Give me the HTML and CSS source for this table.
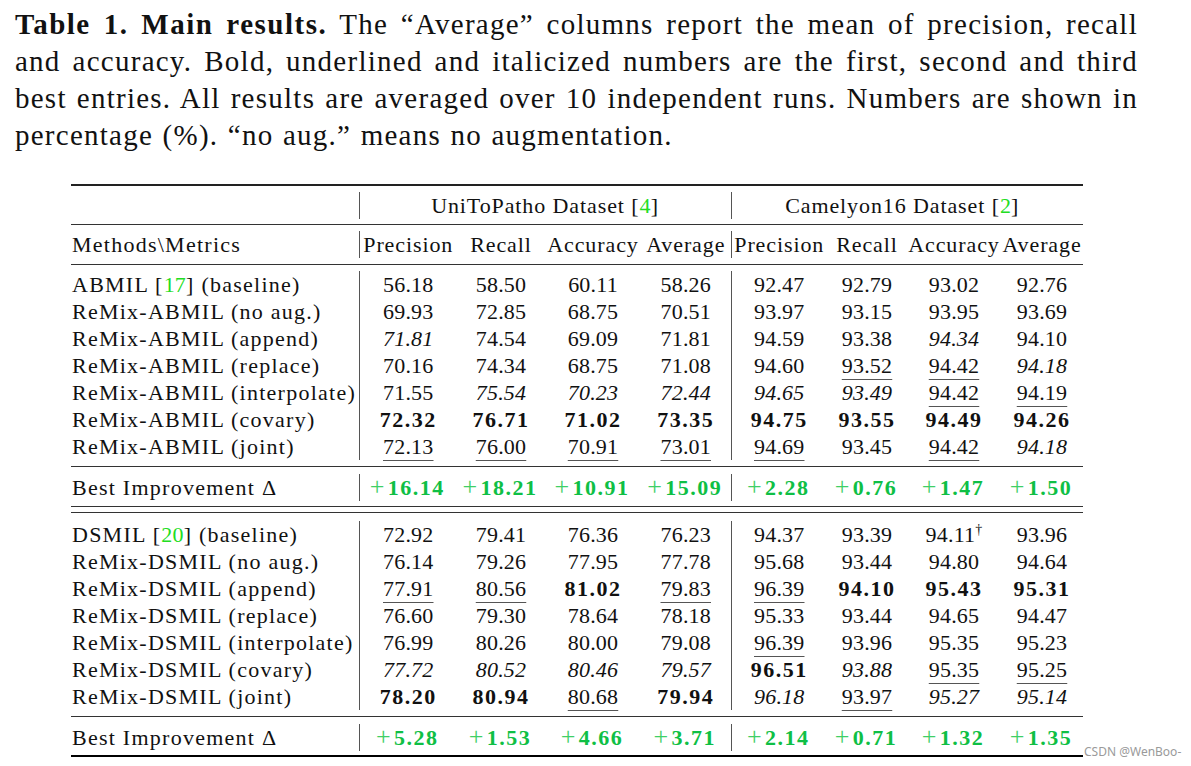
FILE: index.html
```html
<!DOCTYPE html>
<html>
<head>
<meta charset="utf-8">
<link rel="stylesheet" href="styles.css">
</head>
<body>
<div class="page">
  <div class="caption">
    <div class="cline just"><b>Table 1. Main results.</b> The “Average” columns report the mean of precision, recall</div>
    <div class="cline just">and accuracy. Bold, underlined and italicized numbers are the first, second and third</div>
    <div class="cline just">best entries. All results are averaged over 10 independent runs. Numbers are shown in</div>
    <div class="cline">percentage (%). “no aug.” means no augmentation.</div>
  </div>

  <table class="results">
    <colgroup>
      <col class="c-method">
      <col class="c-a1"><col class="c-a2"><col class="c-a3"><col class="c-a4">
      <col class="c-b1"><col class="c-b2"><col class="c-b3"><col class="c-b4">
    </colgroup>
    <tr class="rule"><td colspan="9"><div class="line top"></div></td></tr>
    <tr class="row head">
      <td></td>
      <td colspan="4" class="vl">UniToPatho Dataset [<span class="cite">4</span>]</td>
      <td colspan="4" class="vl cam">Camelyon16 Dataset [<span class="cite">2</span>]</td>
    </tr>
    <tr class="rule"><td colspan="9"><div class="line mid m1"></div></td></tr>
    <tr class="row head">
      <td class="name">Methods\Metrics</td>
      <td class="vl">Precision</td><td>Recall</td><td>Accuracy</td><td>Average</td>
      <td class="vl">Precision</td><td>Recall</td><td>Accuracy</td><td>Average</td>
    </tr>
    <tr class="rule"><td colspan="9"><div class="line mid m2"></div></td></tr>

    <tr class="row">
      <td class="name">ABMIL [<span class="cite">17</span>] (baseline)</td>
      <td class="vl">56.18</td><td>58.50</td><td>60.11</td><td>58.26</td>
      <td class="vl">92.47</td><td>92.79</td><td>93.02</td><td>92.76</td>
    </tr>
    <tr class="row">
      <td class="name">ReMix-ABMIL (no aug.)</td>
      <td class="vl">69.93</td><td>72.85</td><td>68.75</td><td>70.51</td>
      <td class="vl">93.97</td><td>93.15</td><td>93.95</td><td>93.69</td>
    </tr>
    <tr class="row">
      <td class="name">ReMix-ABMIL (append)</td>
      <td class="vl"><i>71.81</i></td><td>74.54</td><td>69.09</td><td>71.81</td>
      <td class="vl">94.59</td><td>93.38</td><td><i>94.34</i></td><td>94.10</td>
    </tr>
    <tr class="row">
      <td class="name">ReMix-ABMIL (replace)</td>
      <td class="vl">70.16</td><td>74.34</td><td>68.75</td><td>71.08</td>
      <td class="vl">94.60</td><td><u>93.52</u></td><td><u>94.42</u></td><td><i>94.18</i></td>
    </tr>
    <tr class="row">
      <td class="name">ReMix-ABMIL (interpolate)</td>
      <td class="vl">71.55</td><td><i>75.54</i></td><td><i>70.23</i></td><td><i>72.44</i></td>
      <td class="vl"><i>94.65</i></td><td><i>93.49</i></td><td><u>94.42</u></td><td><u>94.19</u></td>
    </tr>
    <tr class="row">
      <td class="name">ReMix-ABMIL (covary)</td>
      <td class="vl"><b>72.32</b></td><td><b>76.71</b></td><td><b>71.02</b></td><td><b>73.35</b></td>
      <td class="vl"><b>94.75</b></td><td><b>93.55</b></td><td><b>94.49</b></td><td><b>94.26</b></td>
    </tr>
    <tr class="row">
      <td class="name">ReMix-ABMIL (joint)</td>
      <td class="vl"><u>72.13</u></td><td><u>76.00</u></td><td><u>70.91</u></td><td><u>73.01</u></td>
      <td class="vl"><u>94.69</u></td><td>93.45</td><td><u>94.42</u></td><td><i>94.18</i></td>
    </tr>
    <tr class="rule"><td colspan="9"><div class="line mid m3"></div></td></tr>
    <tr class="row best">
      <td class="name">Best Improvement Δ</td>
      <td class="vl"><span class="pl">+</span>16.14</td><td><span class="pl">+</span>18.21</td><td><span class="pl">+</span>10.91</td><td><span class="pl">+</span>15.09</td>
      <td class="vl"><span class="pl">+</span>2.28</td><td><span class="pl">+</span>0.76</td><td><span class="pl">+</span>1.47</td><td><span class="pl">+</span>1.50</td>
    </tr>
    <tr class="rule"><td colspan="9"><div class="double"></div></td></tr>

    <tr class="row">
      <td class="name">DSMIL [<span class="cite">20</span>] (baseline)</td>
      <td class="vl">72.92</td><td>79.41</td><td>76.36</td><td>76.23</td>
      <td class="vl">94.37</td><td>93.39</td><td>94.11<sup class="dag">†</sup></td><td>93.96</td>
    </tr>
    <tr class="row">
      <td class="name">ReMix-DSMIL (no aug.)</td>
      <td class="vl">76.14</td><td>79.26</td><td>77.95</td><td>77.78</td>
      <td class="vl">95.68</td><td>93.44</td><td>94.80</td><td>94.64</td>
    </tr>
    <tr class="row">
      <td class="name">ReMix-DSMIL (append)</td>
      <td class="vl"><u>77.91</u></td><td><u>80.56</u></td><td><b>81.02</b></td><td><u>79.83</u></td>
      <td class="vl"><u>96.39</u></td><td><b>94.10</b></td><td><b>95.43</b></td><td><b>95.31</b></td>
    </tr>
    <tr class="row">
      <td class="name">ReMix-DSMIL (replace)</td>
      <td class="vl">76.60</td><td>79.30</td><td>78.64</td><td>78.18</td>
      <td class="vl">95.33</td><td>93.44</td><td>94.65</td><td>94.47</td>
    </tr>
    <tr class="row">
      <td class="name">ReMix-DSMIL (interpolate)</td>
      <td class="vl">76.99</td><td>80.26</td><td>80.00</td><td>79.08</td>
      <td class="vl"><u>96.39</u></td><td>93.96</td><td>95.35</td><td>95.23</td>
    </tr>
    <tr class="row">
      <td class="name">ReMix-DSMIL (covary)</td>
      <td class="vl"><i>77.72</i></td><td><i>80.52</i></td><td><i>80.46</i></td><td><i>79.57</i></td>
      <td class="vl"><b>96.51</b></td><td><i>93.88</i></td><td><u>95.35</u></td><td><u>95.25</u></td>
    </tr>
    <tr class="row">
      <td class="name">ReMix-DSMIL (joint)</td>
      <td class="vl"><b>78.20</b></td><td><b>80.94</b></td><td><u>80.68</u></td><td><b>79.94</b></td>
      <td class="vl"><i>96.18</i></td><td><u>93.97</u></td><td><i>95.27</i></td><td><i>95.14</i></td>
    </tr>
    <tr class="rule"><td colspan="9"><div class="line mid m3"></div></td></tr>
    <tr class="row best">
      <td class="name">Best Improvement Δ</td>
      <td class="vl"><span class="pl">+</span>5.28</td><td><span class="pl">+</span>1.53</td><td><span class="pl">+</span>4.66</td><td><span class="pl">+</span>3.71</td>
      <td class="vl"><span class="pl">+</span>2.14</td><td><span class="pl">+</span>0.71</td><td><span class="pl">+</span>1.32</td><td><span class="pl">+</span>1.35</td>
    </tr>
    <tr class="rule"><td colspan="9"><div class="line bottom"></div></td></tr>
  </table>

  <div class="watermark">CSDN @WenBoo-</div>
</div>
</body>
</html>
```

FILE: styles.css
```css
html, body {
  margin: 0;
  padding: 0;
  background: #ffffff;
}

.page {
  position: relative;
  width: 1191px;
  height: 766px;
  overflow: hidden;
  font-family: "Liberation Serif", "DejaVu Serif", serif;
  color: #111;
}

.caption {
  padding: 6px 0 0 15px;
  width: 1123px;
  font-size: 29px;
  line-height: 37px;
  letter-spacing: 1.25px;
  word-spacing: 1px;
}

.cline {
  white-space: nowrap;
  height: 37px;
}

.cline.just {
  text-align: justify;
  text-align-last: justify;
  white-space: normal;
  overflow: visible;
}

.results {
  margin: 30px 0 0 71px;
  width: 1012px;
  table-layout: fixed;
  border-collapse: collapse;
  border-spacing: 0;
  font-size: 22px;
  letter-spacing: 0.2px;
}

.c-method { width: 288px; }
.c-a1 { width: 98px; }
.c-a2 { width: 88px; }
.c-a3 { width: 96px; }
.c-a4 { width: 90px; }
.c-b1 { width: 96px; }
.c-b2 { width: 80px; }
.c-b3 { width: 94px; }
.c-b4 { width: 82px; }

.results td {
  padding: 0;
}

.row td {
  height: 27px;
  line-height: 27px;
  text-align: center;
  white-space: nowrap;
}

.row td.name {
  text-align: left;
  padding-left: 1px;
  letter-spacing: 1.25px;
}

.head td {
  letter-spacing: 0.9px;
}

.row td.vl {
  border-left: 1px solid #555;
}

.row td.cam {
  padding-right: 10px;
}

.line {
  background: #222;
  height: 1px;
}

.line.top {
  height: 2px;
  margin: 0 0 6px;
}

.line.m1 { margin: 5px 0 6px; background: #333; }
.line.m2 { margin: 6px 0 6px; background: #333; }
.line.m3 { margin: 6px 0 7px; background: #333; }

.line.bottom {
  height: 2px;
  margin: 4px 0 0;
  background: #000;
}

.double {
  margin: 5px 0 8px;
  height: 5px;
  border-top: 1px solid #333;
  border-bottom: 1px solid #333;
}

.cite {
  color: #22dd22;
  letter-spacing: 0.2px;
}

b {
  letter-spacing: 1.5px;
}

.best td {
  color: #0fbf45;
  font-weight: bold;
  letter-spacing: 1.5px;
}

.best td.name {
  color: #111;
  font-weight: normal;
  letter-spacing: 1.25px;
}

.pl {
  font-weight: normal;
  color: #3fcf66;
  margin-right: 2px;
  margin-left: -2px;
  font-size: 26px;
  line-height: 0;
}

u {
  text-decoration: underline;
  text-decoration-thickness: 1px;
  text-underline-offset: 6px;
  text-decoration-color: #555;
}

.dag {
  font-size: 14px;
  line-height: 0;
  vertical-align: 8px;
}

.watermark {
  position: absolute;
  left: 1084px;
  top: 744px;
  font-family: "Noto Sans", "Liberation Sans", sans-serif;
  font-size: 12px;
  line-height: 16px;
  color: #9a9a9a;
  letter-spacing: 0;
}
```
